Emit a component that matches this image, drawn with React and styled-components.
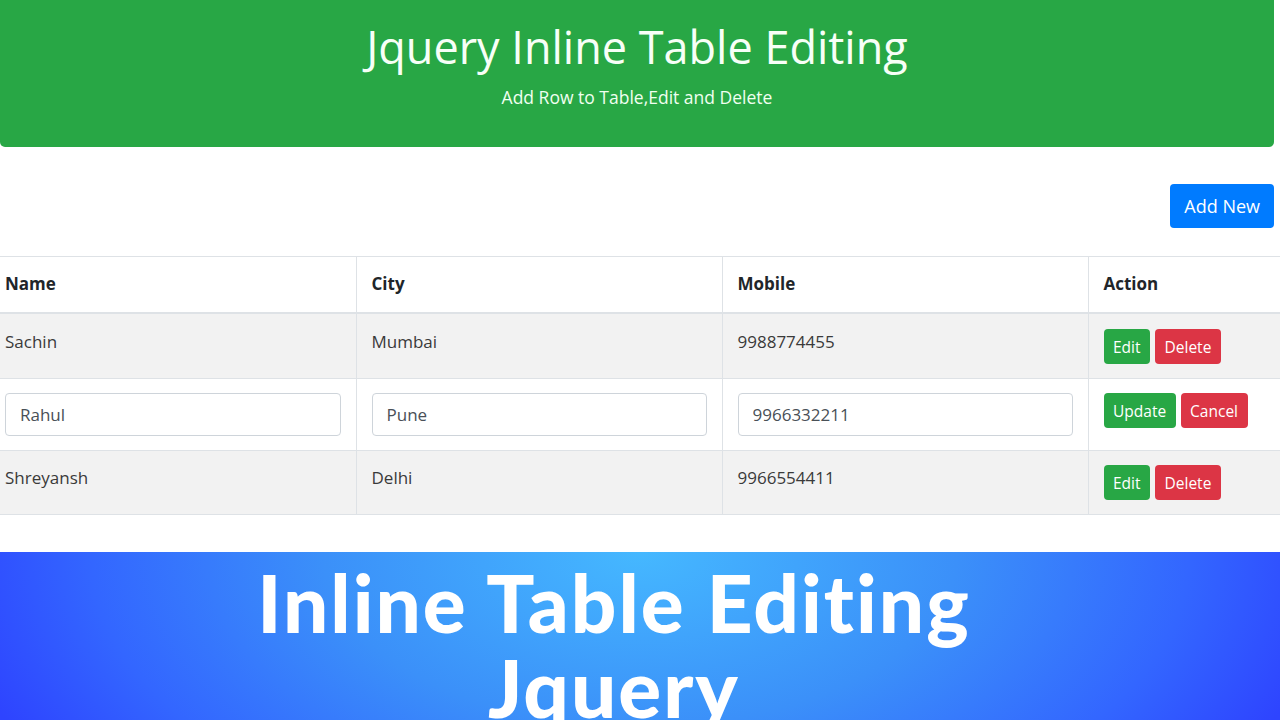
import React from 'react';
import styled, { createGlobalStyle } from 'styled-components';

const rows = [
  { name: 'Sachin', city: 'Mumbai', mobile: '9988774455', editing: false },
  { name: 'Rahul', city: 'Pune', mobile: '9966332211', editing: true },
  { name: 'Shreyansh', city: 'Delhi', mobile: '9966554411', editing: false },
];

const GlobalStyle = createGlobalStyle`
  html, body {
    margin: 0;
    padding: 0;
    width: 1280px;
    height: 720px;
    overflow: hidden;
    background: #fff;
    font-family: "Open Sans", "Noto Sans", sans-serif;
    color: #212529;
  }
  * { box-sizing: border-box; }
`;

const Page = styled.div`
  width: 1280px;
  height: 720px;
  display: flex;
  flex-direction: column;
`;

const Jumbotron = styled.header`
  height: 147px;
  flex-shrink: 0;
  margin-right: 6px;
  background: #28a745;
  border-radius: 0 0 5px 5px;
  color: #fff;
  text-align: center;
  padding-top: 20px;
`;

const Title = styled.h1`
  margin: 0;
  font-size: 45px;
  line-height: 54px;
  font-weight: 500;
  color: #f7fff7;
`;

const Subtitle = styled.p`
  margin: 10px 0 0;
  font-size: 17.5px;
  line-height: 26px;
  color: #f0fff0;
`;

const Toolbar = styled.div`
  display: flex;
  justify-content: flex-end;
  padding-right: 6px;
  margin-top: 37px;
`;

const AddButton = styled.button`
  height: 44px;
  padding: 0 14px;
  border: none;
  border-radius: 4px;
  background: #007bff;
  color: #fff;
  font-family: inherit;
  font-size: 18px;
`;

const Table = styled.table`
  margin-top: 28px;
  width: 1280px;
  table-layout: fixed;
  border-collapse: collapse;
  font-size: 17px;
  line-height: 26px;

  tbody tr:first-child td {
    padding-top: 15px;
  }
`;

const Th = styled.th`
  text-align: left;
  font-weight: 700;
  padding: 14px 15px 15px ${p => (p.$first ? '5px' : '15px')};
  border-top: 1px solid #dee2e6;
  border-bottom: 2px solid #dee2e6;
  border-left: ${p => (p.$first ? 'none' : '1px solid #dee2e6')};
  vertical-align: top;
`;

const Tr = styled.tr`
  background: ${p => (p.$striped ? '#f2f2f2' : '#fff')};
`;

const Td = styled.td`
  padding: 14px 15px 14px ${p => (p.$first ? '5px' : '15px')};
  border-top: 1px solid #dee2e6;
  border-bottom: 1px solid #dee2e6;
  border-left: ${p => (p.$first ? 'none' : '1px solid #dee2e6')};
  vertical-align: top;
  color: #3a3a3a;
`;

const Input = styled.input`
  display: block;
  width: 100%;
  height: 43px;
  padding: 0 14px;
  border: 1px solid #ced4da;
  border-radius: 4px;
  background: #fff;
  font-family: inherit;
  font-size: 17px;
  color: #495057;
  outline: none;
`;

const Actions = styled.div`
  display: flex;
  gap: 5px;
`;

const Btn = styled.button`
  height: 35px;
  padding: 0 9.5px;
  border: none;
  border-radius: 4px;
  background: ${p => (p.$variant === 'danger' ? '#dc3545' : '#28a745')};
  color: #fff;
  font-family: inherit;
  font-size: 15.5px;
`;

const Banner = styled.section`
  flex: 1;
  margin-top: 37px;
  background: radial-gradient(ellipse 55% 230% at 50% 0%, #45b8ff 0%, #3b90f9 45%, #3366ff 78%, #2e44ff 100%);
  text-align: center;
  padding: 8px 52px 0 0;
  overflow: hidden;
`;

const BannerText = styled.h2`
  margin: 0;
  font-family: Lato, "Open Sans", sans-serif;
  font-weight: 900;
  font-size: 80px;
  line-height: 85px;
  letter-spacing: 2px;
  font-variant-ligatures: none;
  color: #fff;
`;

const App = () => {
  return (
    <Page>
      <GlobalStyle />
      <Jumbotron>
        <Title>Jquery Inline Table Editing</Title>
        <Subtitle>Add Row to Table,Edit and Delete</Subtitle>
      </Jumbotron>
      <Toolbar>
        <AddButton>Add New</AddButton>
      </Toolbar>
      <Table>
        <colgroup>
          <col style={{ width: 356 }} />
          <col style={{ width: 366 }} />
          <col style={{ width: 366 }} />
          <col />
        </colgroup>
        <thead>
          <tr>
            <Th $first>Name</Th>
            <Th>City</Th>
            <Th>Mobile</Th>
            <Th>Action</Th>
          </tr>
        </thead>
        <tbody>
          {rows.map((row, index) => (
            <Tr key={index} $striped={index % 2 === 0}>
              {row.editing ? (
                <>
                  <Td $first><Input defaultValue={row.name} /></Td>
                  <Td><Input defaultValue={row.city} /></Td>
                  <Td><Input defaultValue={row.mobile} /></Td>
                  <Td>
                    <Actions>
                      <Btn>Update</Btn>
                      <Btn $variant="danger">Cancel</Btn>
                    </Actions>
                  </Td>
                </>
              ) : (
                <>
                  <Td $first>{row.name}</Td>
                  <Td>{row.city}</Td>
                  <Td>{row.mobile}</Td>
                  <Td>
                    <Actions>
                      <Btn>Edit</Btn>
                      <Btn $variant="danger">Delete</Btn>
                    </Actions>
                  </Td>
                </>
              )}
            </Tr>
          ))}
        </tbody>
      </Table>
      <Banner>
        <BannerText>
          Inline Table Editing
          <br />
          Jquery
        </BannerText>
      </Banner>
    </Page>
  );
};

export default App;
